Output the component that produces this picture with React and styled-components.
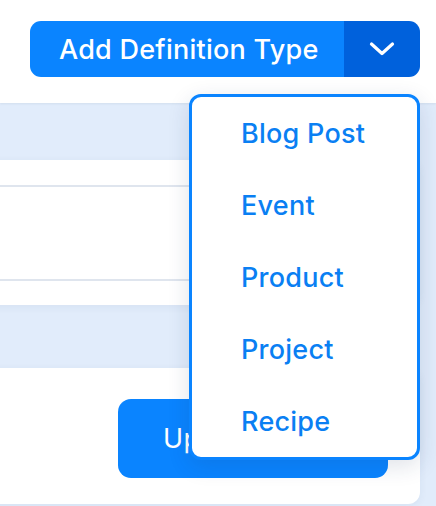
import React from "react";
import styled, { createGlobalStyle } from "styled-components";

const Global = createGlobalStyle`
  html, body { margin: 0; padding: 0; background: #e1ecfb; }
  body { font-family: Inter, "Noto Sans", sans-serif; width: 436px; height: 506px; overflow: hidden; }
  * { box-sizing: border-box; }
`;

const Page = styled.div`
  width: 436px;
  height: 506px;
  display: flex;
  flex-direction: column;
  background: #e1ecfb;
`;

const TopBar = styled.div`
  height: 103px;
  background: #ffffff;
  display: flex;
  justify-content: flex-end;
  align-items: flex-start;
  padding: 21px 16px 0 0;
  box-shadow: 0 1px 2px rgba(40, 60, 90, 0.08);
  position: relative;
  z-index: 2;
`;

const SplitWrap = styled.div`
  position: relative;
  display: flex;
  height: 56px;
  border-radius: 11px;
`;

const MainBtn = styled.button`
  border: none;
  height: 56px;
  width: 314px;
  background: #0a84ff;
  color: #fff;
  font-family: Inter, "Noto Sans", sans-serif;
  font-size: 27px;
  font-weight: 500;
  letter-spacing: 0.25px;
  padding: 0 0 0 29px;
  text-align: left;
  border-radius: 11px 0 0 11px;
`;

const ToggleBtn = styled.button`
  border: none;
  height: 56px;
  width: 76px;
  background: #0061dc;
  border-radius: 0 11px 11px 0;
  display: flex;
  align-items: center;
  justify-content: center;
  padding: 0;
`;

const Menu = styled.ul`
  position: absolute;
  top: 73px;
  right: 0;
  width: 231px;
  margin: 0;
  padding: 0;
  list-style: none;
  background: #fff;
  border: 3px solid #0a84ff;
  border-radius: 12px;
  box-shadow: 0 6px 22px rgba(30, 50, 90, 0.14);
  z-index: 10;
`;

const MenuItem = styled.li`
  height: 72px;
  display: flex;
  align-items: center;
  padding-left: 49px;
  font-size: 27px;
  font-weight: 500;
  letter-spacing: 0.25px;
  color: #0a7ff3;
`;

const Content = styled.div`
  flex: 1;
  display: flex;
  flex-direction: column;
  padding-top: 57px;
  gap: 63px;
`;

const Card = styled.div`
  margin-left: -20px;
  width: 440px;
  background: #fff;
  border-radius: 0 12px 12px 0;
  box-shadow: 0 2px 8px rgba(40, 60, 100, 0.06);
  display: flex;
  flex-direction: column;
  height: ${(p) => p.$h}px;
`;

const RowBlock = styled.div`
  margin-top: 25px;
  height: 96px;
  border-top: 2px solid #dfe5ee;
  border-bottom: 2px solid #dfe5ee;
`;

const Footer = styled.div`
  display: flex;
  padding: 31px 0 0 138px;
`;

const UpdateBtn = styled.button`
  border: none;
  width: 270px;
  height: 79px;
  border-radius: 13px;
  background: #0a84ff;
  color: #fff;
  font-family: Inter, "Noto Sans", sans-serif;
  font-size: 27px;
  font-weight: 400;
  letter-spacing: 0.5px;
  text-align: left;
  padding-left: 45px;
`;

const items = ["Blog Post", "Event", "Product", "Project", "Recipe"];

export default function App() {
  return (
    <>
      <Global />
      <Page>
        <TopBar>
          <SplitWrap>
            <MainBtn>Add Definition Type</MainBtn>
            <ToggleBtn aria-label="More">
              <svg width="26" height="16" viewBox="0 0 26 16" fill="none">
                <path d="M2.5 3 L13 12.5 L23.5 3" stroke="#fff" strokeWidth="3.2" strokeLinecap="round" strokeLinejoin="round" />
              </svg>
            </ToggleBtn>
            <Menu>
              {items.map((t) => (
                <MenuItem key={t}>{t}</MenuItem>
              ))}
            </Menu>
          </SplitWrap>
        </TopBar>
        <Content>
          <Card $h={145}>
            <RowBlock />
          </Card>
          <Card $h={136}>
            <Footer>
              <UpdateBtn>Update Order</UpdateBtn>
            </Footer>
          </Card>
        </Content>
      </Page>
    </>
  );
}
